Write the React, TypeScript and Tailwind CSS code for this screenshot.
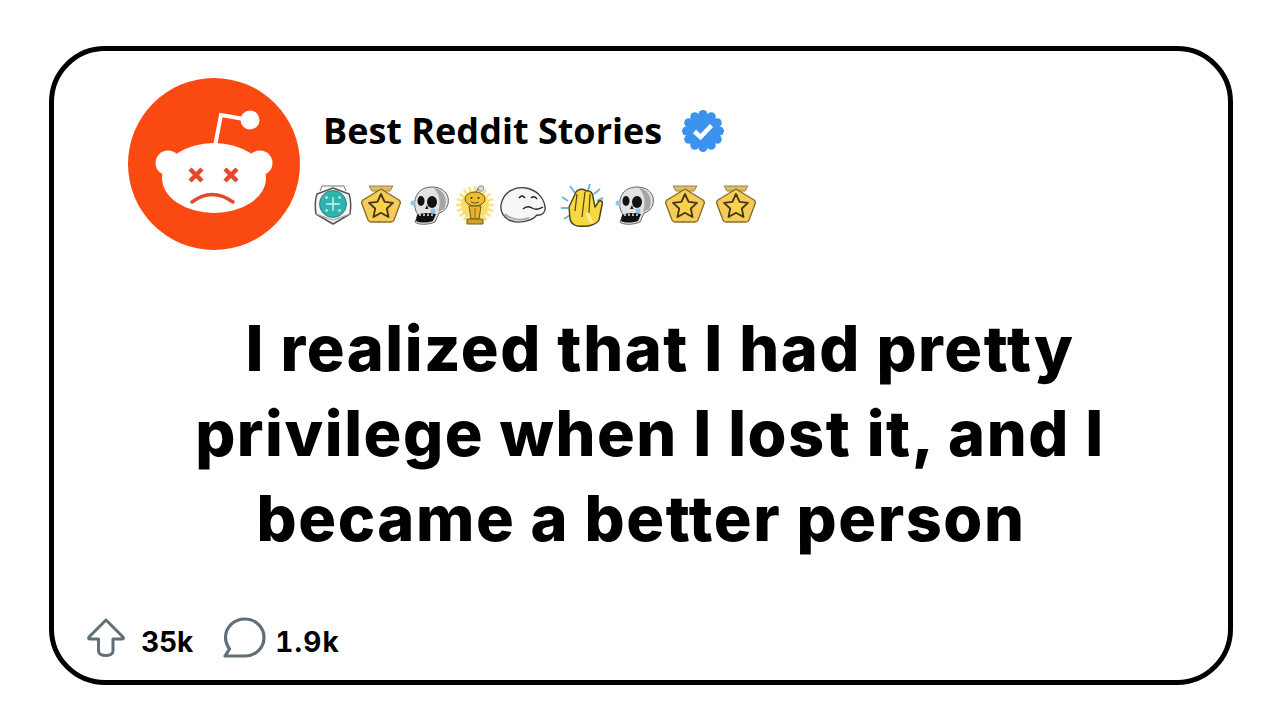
import React from 'react';

function RedditLogo() {
  return (
    <svg width="172" height="172" viewBox="0 0 172 172" className="shrink-0">
      <circle cx="86" cy="86" r="86" fill="#fa4a12" />
      <path d="M87 68 L93 37 L122 42" fill="none" stroke="#fff" strokeWidth="4" />
      <circle cx="122" cy="42" r="9.5" fill="#fff" />
      <circle cx="40" cy="85" r="12.5" fill="#fff" />
      <circle cx="132" cy="85" r="12.5" fill="#fff" />
      <ellipse cx="86" cy="100" rx="52" ry="35" fill="#fff" />
      <path
        d="M62 91 L74 103 M74 91 L62 103 M97 91 L109 103 M109 91 L97 103"
        stroke="#e0492b"
        strokeWidth="4.5"
      />
      <path d="M64 124 Q84 109 105 124" fill="none" stroke="#e0492b" strokeWidth="3.5" strokeLinecap="round" />
    </svg>
  );
}

function Verified() {
  const bumps = Array.from({ length: 12 }, (_, i) => (i * Math.PI * 2) / 12);
  return (
    <svg width="42" height="42" viewBox="0 0 42 42">
      {bumps.map((a, i) => (
        <circle key={i} cx={21 + Math.cos(a) * 16.5} cy={21 + Math.sin(a) * 16.5} r="4.5" fill="#3b93ef" />
      ))}
      <circle cx="21" cy="21" r="17" fill="#3b93ef" />
      <path d="M12.5 21.5 L18.5 27 L29.5 15.5" fill="none" stroke="#fff" strokeWidth="4.5" />
    </svg>
  );
}

function Gem() {
  return (
    <svg width="40" height="40" viewBox="0 0 40 40">
      <path d="M7 6 L9 1 H31 L33 6" fill="#fff" stroke="#777" strokeWidth="1" />
      <path
        d="M20 3 L36 9 C38 15 38 23 37 29 L20 39 L3 29 C2 23 2 15 4 9 Z"
        fill="#f7f7f7"
        stroke="#555"
        strokeWidth="1.5"
        strokeLinejoin="round"
      />
      <path d="M3 29 L20 35 L37 29" fill="none" stroke="#aaa" strokeWidth="1.2" />
      <circle cx="20" cy="19" r="13.5" fill="#2eb3ad" stroke="#3b6b68" strokeWidth="0.8" />
      <path d="M20 12 V26 M13 19 H27" stroke="#c8f3ee" strokeWidth="1.5" />
      <circle cx="13.5" cy="12.5" r="1.3" fill="#c8f3ee" />
      <circle cx="26.5" cy="12.5" r="1.3" fill="#c8f3ee" />
      <circle cx="13.5" cy="25.5" r="1.3" fill="#c8f3ee" />
      <circle cx="26.5" cy="25.5" r="1.3" fill="#c8f3ee" />
    </svg>
  );
}

function StarMedal() {
  return (
    <svg width="40" height="40" viewBox="0 0 40 40">
      <path d="M8 1 H32 L29 6 H11 Z" fill="#e0bd62" stroke="#9a8242" strokeWidth="1" />
      <path
        d="M20 4 L38 15 Q40 17 39 19 L33 35 Q32 37 30 37 H10 Q8 37 7 35 L1 19 Q0 17 2 15 Z"
        fill="#f4cc58"
        stroke="#8a6c2a"
        strokeWidth="1.4"
        strokeLinejoin="round"
      />
      <path
        d="M20 9 L23.6 16.8 L32 17.8 L25.8 23.5 L27.5 32 L20 27.8 L12.5 32 L14.2 23.5 L8 17.8 L16.4 16.8 Z"
        fill="#fbd348"
        stroke="#43361a"
        strokeWidth="1.8"
        strokeLinejoin="round"
      />
    </svg>
  );
}

function Skull() {
  return (
    <svg width="40" height="40" viewBox="0 0 40 40">
      <path
        d="M8 8 C14 0 30 0 36 8 C41 15 38 26 29 28 L25 37 C18 40 8 40 5 37 L8 30 C4 24 3 15 8 8 Z"
        fill="#e2e2e2"
        stroke="#666"
        strokeWidth="1"
      />
      <path d="M24 3 C33 4 39 14 34 24 L28 27 C31 18 30 10 24 3 Z" fill="#a5a5a5" />
      <ellipse cx="11" cy="16" rx="3.5" ry="5" fill="#111" />
      <ellipse cx="22" cy="17" rx="5" ry="6" fill="#111" />
      <path d="M15 24 L17 20 L18.5 24 Z" fill="#222" />
      <path d="M7 30 C13 27.5 20 27.5 26 29 L23 36 C17 38 10 38 6 36 Z" fill="#111" />
      <path d="M10 29 V31 M14 28.5 V31 M18 28.5 V31 M22 29 V31" stroke="#ddd" strokeWidth="1.6" />
      <circle cx="3" cy="18" r="2.5" fill="#8cc7ea" />
      <circle cx="23" cy="26" r="2.5" fill="#8cc7ea" />
    </svg>
  );
}

function Trophy() {
  const rays = Array.from({ length: 20 }, (_, i) => (i * Math.PI * 2) / 20);
  return (
    <svg width="40" height="40" viewBox="0 0 40 40">
      {rays.map((a, i) => (
        <path
          key={i}
          d={`M20 20 L${20 + Math.cos(a) * 19} ${20 + Math.sin(a) * 19}`}
          stroke="#f8e27c"
          strokeWidth="2.5"
        />
      ))}
      <circle cx="20" cy="20" r="14" fill="#f7de6d" />
      <path d="M21 8 L23 3" stroke="#6e5a20" strokeWidth="1" />
      <circle cx="26" cy="3.5" r="2.8" fill="#ddd" stroke="#777" strokeWidth="0.8" />
      <ellipse cx="20" cy="14" rx="10" ry="7" fill="#f1bd2f" stroke="#6e5a20" strokeWidth="1" />
      <circle cx="16.5" cy="13" r="1" fill="#333" />
      <circle cx="23.5" cy="13" r="1" fill="#333" />
      <path d="M16 17 Q20 19.5 24 17" fill="none" stroke="#333" strokeWidth="0.8" />
      <path d="M14 21 H26 L24 34 H16 Z" fill="#e9b42c" stroke="#6e5a20" strokeWidth="1" />
      <path d="M20 23 V33" stroke="#6e5a20" strokeWidth="0.8" />
      <path d="M12 34 H28 V39 H12 Z" fill="#d6a127" stroke="#6e5a20" strokeWidth="1" />
    </svg>
  );
}

function Seal() {
  return (
    <svg width="48" height="40" viewBox="0 0 48 40" className="shrink-0">
      <path
        d="M2 20 C4 7 16 1 27 3 C38 5 45 13 46 22 C47 27 43 31 38 30 C32 37 18 39 10 35 C5 32 1 27 2 20 Z"
        fill="#f6f6f6"
        stroke="#444"
        strokeWidth="1.4"
      />
      <path d="M6 29 C12 35 22 36 30 33" fill="none" stroke="#aaa" strokeWidth="2" />
      <path d="M20 13 Q23 9 26 13 M32 13 Q35 10 38 14" fill="none" stroke="#222" strokeWidth="1.4" />
      <path d="M24 24 Q28 20 33 23 Q38 26 44 22" fill="none" stroke="#222" strokeWidth="1.4" />
    </svg>
  );
}

function Clap() {
  return (
    <svg width="44" height="44" viewBox="0 0 44 44" className="shrink-0">
      <path
        d="M10 3 L15 10 M30 1 L28 7 M40 6 L34 11 M2 14 L8 18 M1 25 L8 25 M4 36 L10 32 M43 15 L37 18"
        stroke="#6db7d8"
        strokeWidth="2"
      />
      <path
        d="M9 24 L16 9 C18 6 24 5 26 8 C30 7 33 10 33 14 L35 24 L39 18 C42 17 43 19 42 22 L39 37 C36 42 27 44 22 43 C16 44 11 41 10 36 Z"
        fill="#f7d83f"
        stroke="#4c4216"
        strokeWidth="1.4"
        strokeLinejoin="round"
      />
      <path d="M17 11 L15 28 M25 9 L22 34 M30 11 L29 30" stroke="#4c4216" strokeWidth="1.2" fill="none" />
      <path d="M27 30 L32 40" stroke="#fbf09a" strokeWidth="3" />
    </svg>
  );
}

const badges = [
  { w: 'w-[48px]', el: <Gem /> },
  { w: 'w-[48px]', el: <StarMedal /> },
  { w: 'w-[50px]', el: <Skull /> },
  { w: 'w-[40px]', el: <Trophy /> },
  { w: 'w-[56px]', el: <Seal /> },
  { w: 'w-[62px]', el: <Clap /> },
  { w: 'w-[44px]', el: <Skull /> },
  { w: 'w-[56px]', el: <StarMedal /> },
  { w: 'w-[46px]', el: <StarMedal /> },
];

function Upvote() {
  return (
    <svg width="40" height="40" viewBox="0 0 40 40" className="mb-[8px] shrink-0">
      <path
        d="M20 2 L3 19 Q2 21 4 21 H12.5 V33 C12.5 39 27 39 27 33 V21 H36 Q38 21 37 19 Z"
        fill="none"
        stroke="#5f6e77"
        strokeWidth="3"
        strokeLinejoin="round"
      />
    </svg>
  );
}

function Bubble() {
  return (
    <svg width="44" height="44" viewBox="0 0 44 44" className="mb-[8px] shrink-0">
      <path
        d="M23 3 C12 3 3.5 11 3.5 21.5 C3.5 26 5.5 30 7.5 33 L3 40 H23 C33.5 40 42 32 42 21.5 C42 11 33.5 3 23 3 Z"
        fill="none"
        stroke="#5f6e77"
        strokeWidth="3.2"
        strokeLinejoin="round"
      />
    </svg>
  );
}

export default function App() {
  return (
    <div className="h-[720px] w-[1280px] overflow-hidden bg-white pl-[49px] pt-[46px] font-['Inter',sans-serif] text-black">
      <div className="flex h-[639px] w-[1184px] flex-col rounded-[56px] border-[5px] border-black">
        <div className="flex pl-[74px] pt-[27px]">
          <RedditLogo />
          <div className="flex flex-col">
            <div className="ml-[23px] mt-[31px] flex h-[44px] items-center gap-[20px]">
              <span className="font-['Open_Sans',sans-serif] text-[36px] font-bold leading-[44px]">
                Best Reddit Stories
              </span>
              <Verified />
            </div>
            <div className="ml-[9px] mt-[30px] flex h-[44px] items-center">
              {badges.map((b, i) => (
                <div key={i} className={`flex justify-center ${b.w}`}>
                  {b.el}
                </div>
              ))}
            </div>
          </div>
        </div>

        <div className="mt-[56px] flex flex-col items-center text-[63px] font-extrabold leading-[85px] tracking-[1.55px]">
          <div className="ml-[38px]">I realized that I had pretty</div>
          <div className="ml-[18px]">privilege when I lost it, and I</div>
          <div>became a better person</div>
        </div>

        <div className="ml-[32px] mt-[59px] flex h-[44px] items-center text-[28px] font-bold leading-[40px]">
          <Upvote />
          <span className="ml-[15px]">35k</span>
          <div className="ml-[29px] flex items-center">
            <Bubble />
          </div>
          <span className="ml-[9px] tracking-[1.2px] tabular-nums">1.9k</span>
        </div>
      </div>
    </div>
  );
}
